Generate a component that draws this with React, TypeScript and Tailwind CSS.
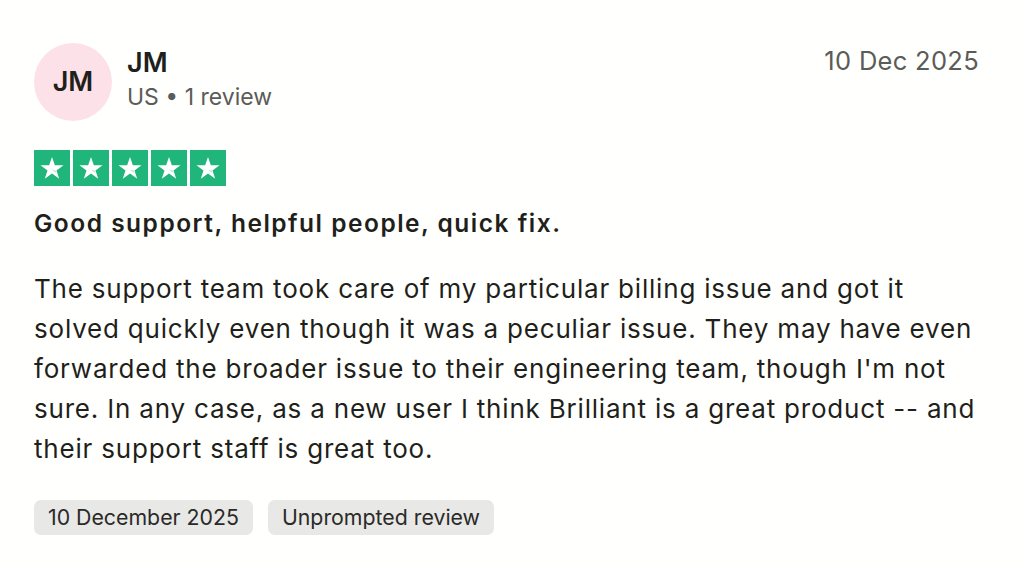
import React from "react";

// Trustpilot-ish star tile
const StarTile: React.FC = () => (
  <div className="w-9 h-9 bg-[#1fb57b] flex items-center justify-center">
    <svg viewBox="0 0 24 24" className="w-[28px] h-[28px]">
      <path
        d="M12 2.6l2.45 7.1h7.45l-6.03 4.38 2.3 7.12L12 16.8l-6.17 4.4 2.3-7.12L2.1 9.7h7.45z"
        fill="#ffffff"
      />
      <path d="M15.1 14.2l.62 2-3.72-2.7z" fill="#1fb57b" opacity="0.35" />
    </svg>
  </div>
);

const tags = ["10 December 2025", "Unprompted review"];

const App: React.FC = () => {
  return (
    <div
      className="w-[1024px] h-[568px] bg-[#fffffd] text-[#1f1f1c] overflow-hidden"
      style={{ fontFamily: "Inter, 'Liberation Sans', sans-serif" }}
    >
      <div className="pl-[34px] pr-[28px] pt-[43px]">
        {/* header */}
        <div className="flex justify-between">
          <div className="flex gap-[15px]">
            <div className="w-[78px] h-[78px] rounded-full bg-[#fde1e8] flex items-center justify-center text-[27px] font-semibold">
              JM
            </div>
            <div className="pt-[4px]">
              <div className="text-[27px] font-semibold leading-[32px]">JM</div>
              <div className="mt-[3px] text-[23px] leading-[30px] text-[#5b5b58]">
                US • 1 review
              </div>
            </div>
          </div>
          <div className="mr-[17px] pt-[4px] text-[25.5px] leading-[28px] text-[#5b5b58] tracking-[0.3px]">
            10 Dec 2025
          </div>
        </div>

        {/* stars */}
        <div className="mt-[29px] flex gap-[3px]">
          {[0, 1, 2, 3, 4].map((i) => (
            <StarTile key={i} />
          ))}
        </div>

        {/* title */}
        <h2 className="mt-[21px] text-[24.5px] leading-[32px] font-semibold tracking-[1.5px]">
          Good support, helpful people, quick fix.
        </h2>

        {/* body */}
        <p className="mt-[30px] text-[26px] leading-[40px] tracking-[0.8px]">
          The support team took care of my particular billing issue and got it solved quickly even
          though it was a peculiar issue. They may have even forwarded the broader issue to their
          engineering team, though I'm not sure. In any case, as a new user I think Brilliant is a
          great product -- and their support staff is great too.
        </p>

        {/* tags */}
        <div className="mt-[31px] flex gap-[15px]">
          {tags.map((t) => (
            <span
              key={t}
              className="h-[35px] px-[14px] rounded-[7px] bg-[#e8e8e6] text-[21.3px] leading-[35px] text-[#2a2a28]"
            >
              {t}
            </span>
          ))}
        </div>
      </div>
    </div>
  );
};

export default App;
